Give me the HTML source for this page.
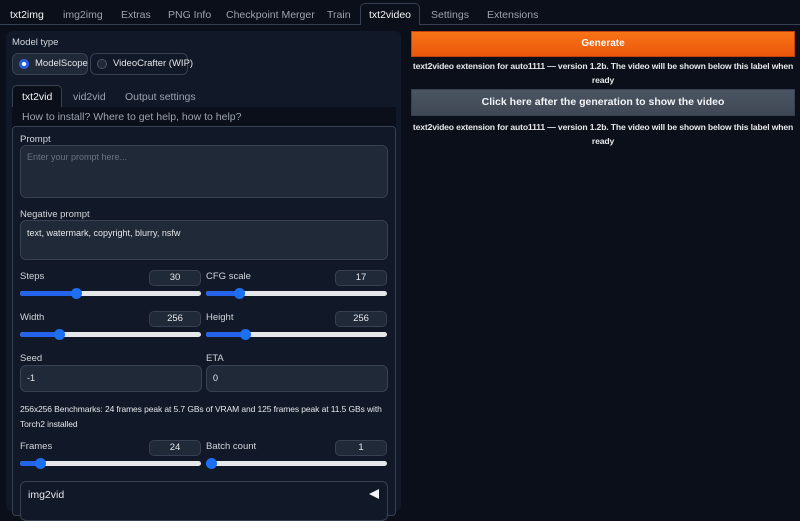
<!DOCTYPE html>
<html><head><style>
*{box-sizing:border-box;margin:0;padding:0}
body{width:800px;height:507px;overflow:hidden;background:#0b0f19;font-family:"Liberation Sans",sans-serif;color:#e5e7eb;position:relative;font-size:11px}
.a{position:absolute;white-space:nowrap}
.tab{position:absolute;top:9px;font-size:10.5px;color:#9ca3af}
.lbl{position:absolute;font-size:9.5px;color:#d1d5db}
.inp{position:absolute;background:#1f2937;border:1px solid #374151;border-radius:6px}
.num{position:absolute;background:#1f2937;border:1px solid #374151;border-radius:5px;height:16px;width:52px;font-size:9.5px;text-align:center;line-height:14px;color:#e5e7eb}
.sl{position:absolute;height:5px;border-radius:3px;background:#e5e7eb;width:181px}
.sl i{position:absolute;left:0;top:0;height:5px;border-radius:3px;background:#2563eb}
.sl b{position:absolute;top:-3.5px;width:11px;height:11px;border-radius:50%;background:#1d6ff2;margin-left:-5px}
.info{position:absolute;left:409px;width:388px;text-align:center;font-size:8.6px;font-weight:bold;color:#e5e7eb;line-height:14px;letter-spacing:-0.15px}
</style></head><body>
<div class="a" style="left:0;top:24px;width:800px;height:1px;background:#374151"></div>
<div class="tab" style="left:10px;color:#f3f4f6">txt2img</div>
<div class="tab" style="left:63px">img2img</div>
<div class="tab" style="left:121px">Extras</div>
<div class="tab" style="left:168px">PNG Info</div>
<div class="tab" style="left:226px">Checkpoint Merger</div>
<div class="tab" style="left:327px">Train</div>
<div class="a" style="left:360px;top:3px;width:60px;height:22px;background:#0b0f19;border:1px solid #374151;border-bottom:none;border-radius:5px 5px 0 0"></div>
<div class="tab" style="left:369px;color:#f3f4f6">txt2video</div>
<div class="tab" style="left:431px">Settings</div>
<div class="tab" style="left:487px">Extensions</div>

<div class="a" style="left:6px;top:31px;width:395px;height:480px;background:#111827;border-radius:6px"></div>
<div class="lbl" style="left:12px;top:37px">Model type</div>
<div class="a" style="left:12px;top:53px;width:76px;height:22px;border:1px solid #374151;border-radius:6px;background:#1f2937"></div>
<div class="a" style="left:19px;top:59px;width:10px;height:10px;border-radius:50%;background:#2563eb"></div>
<div class="a" style="left:22px;top:62px;width:4px;height:4px;border-radius:50%;background:#fff"></div>
<div class="a" style="left:35px;top:58px;font-size:9.5px">ModelScope</div>
<div class="a" style="left:90px;top:53px;width:98px;height:22px;border:1px solid #374151;border-radius:6px;background:#111827"></div>
<div class="a" style="left:97px;top:59px;width:10px;height:10px;border-radius:50%;border:1px solid #4b5563;background:#1f2937"></div>
<div class="a" style="left:113px;top:58px;font-size:9.5px">VideoCrafter (WIP)</div>

<div class="a" style="left:12px;top:85px;width:50px;height:23px;background:#0b0f19;border:1px solid #374151;border-bottom:none;border-radius:5px 5px 0 0"></div>
<div class="a" style="left:22px;top:91px;font-size:10.5px;color:#f3f4f6">txt2vid</div>
<div class="a" style="left:73px;top:91px;font-size:10.5px;color:#9ca3af">vid2vid</div>
<div class="a" style="left:125px;top:91px;font-size:10.5px;color:#9ca3af">Output settings</div>
<div class="a" style="left:12px;top:107px;width:384px;height:400px;background:#0b0f19"></div>
<div class="a" style="left:22px;top:111px;font-size:10.5px;color:#9ca3af">How to install? Where to get help, how to help?</div>
<div class="a" style="left:12px;top:126px;width:384px;height:390px;background:#111827;border:1px solid #374151;border-radius:4px"></div>

<div class="lbl" style="left:20px;top:134px">Prompt</div>
<div class="inp" style="left:20px;top:145px;width:368px;height:53px"></div>
<div class="a" style="left:27px;top:152px;font-size:9px;color:#6b7280">Enter your prompt here...</div>
<div class="lbl" style="left:20px;top:209px">Negative prompt</div>
<div class="inp" style="left:20px;top:220px;width:368px;height:40px"></div>
<div class="a" style="left:27px;top:228px;font-size:9px;color:#e5e7eb">text, watermark, copyright, blurry, nsfw</div>

<div class="lbl" style="left:20px;top:271px">Steps</div><div class="num" style="left:149px;top:270px">30</div>
<div class="sl" style="left:20px;top:291px"><i style="width:56px"></i><b style="left:56px"></b></div>
<div class="lbl" style="left:206px;top:271px">CFG scale</div><div class="num" style="left:335px;top:270px">17</div>
<div class="sl" style="left:206px;top:291px"><i style="width:33px"></i><b style="left:33px"></b></div>

<div class="lbl" style="left:20px;top:312px">Width</div><div class="num" style="left:149px;top:311px">256</div>
<div class="sl" style="left:20px;top:332px"><i style="width:39px"></i><b style="left:39px"></b></div>
<div class="lbl" style="left:206px;top:312px">Height</div><div class="num" style="left:335px;top:311px">256</div>
<div class="sl" style="left:206px;top:332px"><i style="width:39px"></i><b style="left:39px"></b></div>

<div class="lbl" style="left:20px;top:353px">Seed</div>
<div class="inp" style="left:20px;top:365px;width:182px;height:27px"></div>
<div class="a" style="left:27px;top:373px;font-size:9px">-1</div>
<div class="lbl" style="left:206px;top:353px">ETA</div>
<div class="inp" style="left:206px;top:365px;width:182px;height:27px"></div>
<div class="a" style="left:213px;top:373px;font-size:9px">0</div>

<div class="a" style="left:20px;top:402px;font-size:8.5px;line-height:15px;white-space:normal;width:372px;letter-spacing:-0.1px">256x256 Benchmarks: 24 frames peak at 5.7 GBs of VRAM and 125 frames peak at 11.5 GBs with Torch2 installed</div>

<div class="lbl" style="left:20px;top:441px">Frames</div><div class="num" style="left:149px;top:440px">24</div>
<div class="sl" style="left:20px;top:461px"><i style="width:20px"></i><b style="left:20px"></b></div>
<div class="lbl" style="left:206px;top:441px">Batch count</div><div class="num" style="left:335px;top:440px">1</div>
<div class="sl" style="left:206px;top:461px"><b style="left:5px"></b></div>

<div class="a" style="left:20px;top:481px;width:368px;height:40px;border:1px solid #374151;border-radius:6px;background:#111827"></div>
<div class="a" style="left:28px;top:489px;font-size:10.5px">img2vid</div>
<div class="a" style="left:369px;top:489px;width:0;height:0;border-top:5px solid transparent;border-bottom:5px solid transparent;border-right:10px solid #f3f4f6"></div>

<div class="a" style="left:411px;top:31px;width:384px;height:26px;background:linear-gradient(#f97316,#ea580c);border:1px solid #c2410c;color:#fff;font-weight:bold;font-size:10px;text-align:center;line-height:24px">Generate</div>
<div class="info" style="top:59px">text2video extension for auto1111 — version 1.2b. The video will be shown below this label when ready</div>
<div class="a" style="left:411px;top:89px;width:384px;height:27px;background:linear-gradient(#4b5563,#3f4753);border:1px solid #374151;color:#f3f4f6;font-weight:bold;font-size:10.5px;text-align:center;line-height:25px">Click here after the generation to show the video</div>
<div class="info" style="top:120px">text2video extension for auto1111 — version 1.2b. The video will be shown below this label when ready</div>
</body></html>
